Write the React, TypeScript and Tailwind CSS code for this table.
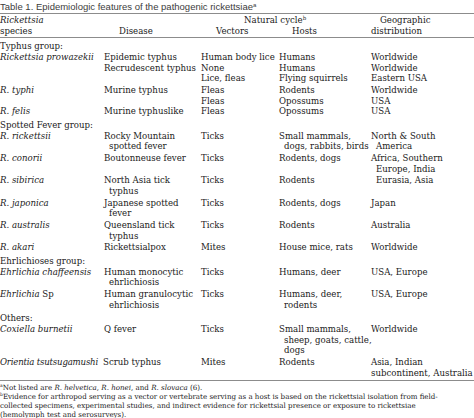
import type { ReactNode } from "react";

type Entry = {
  species?: ReactNode;
  disease?: string[];
  vectors?: string[];
  hosts?: string[];
  geo?: string[];
  gap?: boolean;
  tight?: boolean;
};

type Row = { heading: string } | Entry;

const rows: Row[] = [
  { heading: "Typhus group:" },
  {
    species: <i>Rickettsia prowazekii</i>,
    disease: ["Epidemic typhus"],
    vectors: ["Human body lice"],
    hosts: ["Humans"],
    geo: ["Worldwide"],
  },
  {
    disease: ["Recrudescent typhus"],
    vectors: ["None"],
    hosts: ["Humans"],
    geo: ["Worldwide"],
  },
  {
    vectors: ["Lice, fleas"],
    hosts: ["Flying squirrels"],
    geo: ["Eastern USA"],
  },
  {
    species: <i>R. typhi</i>,
    disease: ["Murine typhus"],
    vectors: ["Fleas", "Fleas"],
    hosts: ["Rodents", "Opossums"],
    geo: ["Worldwide", "USA"],
    gap: true,
  },
  {
    species: <i>R. felis</i>,
    disease: ["Murine typhuslike"],
    vectors: ["Fleas"],
    hosts: ["Opossums"],
    geo: ["USA"],
  },
  { heading: "Spotted Fever group:" },
  {
    species: <i>R. rickettsii</i>,
    disease: ["Rocky Mountain", " spotted fever"],
    vectors: ["Ticks"],
    hosts: ["Small mammals,", " dogs, rabbits, birds"],
    geo: ["North & South", " America"],
  },
  {
    species: <i>R. conorii</i>,
    disease: ["Boutonneuse fever"],
    vectors: ["Ticks"],
    hosts: ["Rodents, dogs"],
    geo: ["Africa, Southern", " Europe, India"],
    gap: true,
  },
  {
    species: <i>R. sibirica</i>,
    disease: ["North Asia tick", " typhus"],
    vectors: ["Ticks"],
    hosts: ["Rodents"],
    geo: [" Eurasia, Asia"],
    gap: true,
  },
  {
    species: <i>R. japonica</i>,
    disease: ["Japanese spotted", " fever"],
    vectors: ["Ticks"],
    hosts: ["Rodents, dogs"],
    geo: ["Japan"],
    gap: true,
  },
  {
    species: <i>R. australis</i>,
    disease: ["Queensland tick", " typhus"],
    vectors: ["Ticks"],
    hosts: ["Rodents"],
    geo: ["Australia"],
    gap: true,
  },
  {
    species: <i>R. akari</i>,
    disease: ["Rickettsialpox"],
    vectors: ["Mites"],
    hosts: ["House mice, rats"],
    geo: ["Worldwide"],
    gap: true,
  },
  { heading: "Ehrlichioses group:" },
  {
    species: <i>Ehrlichia chaffeensis</i>,
    disease: ["Human monocytic", " ehrlichiosis"],
    vectors: ["Ticks"],
    hosts: ["Humans, deer"],
    geo: ["USA, Europe"],
  },
  {
    species: (
      <>
        <i>Ehrlichia</i> Sp
      </>
    ),
    disease: ["Human granulocytic", " ehrlichiosis"],
    vectors: ["Ticks"],
    hosts: ["Humans, deer,", " rodents"],
    geo: ["USA, Europe"],
    gap: true,
  },
  { heading: "Others:" },
  {
    species: <i>Coxiella burnetii</i>,
    disease: ["Q fever"],
    vectors: ["Ticks"],
    hosts: ["Small mammals,", " sheep, goats, cattle,", " dogs"],
    geo: ["Worldwide"],
  },
  {
    species: <i>Orientia tsutsugamushi</i>,
    disease: ["Scrub typhus"],
    vectors: ["Mites"],
    hosts: ["Rodents"],
    geo: ["Asia, Indian", "subcontinent, Australia"],
    gap: true,
    tight: true,
  },
];

const grid = "grid grid-cols-[104px_97px_78px_92px_1fr]";

function Lines({ lines }: { lines?: string[] }) {
  return (
    <div>
      {(lines ?? []).map((l, i) => (
        <div
          key={i}
          className={`whitespace-nowrap ${l.startsWith(" ") ? "pl-[5px]" : ""}`}
        >
          {l.trim()}
        </div>
      ))}
    </div>
  );
}

function EntryRow({ e }: { e: Entry }) {
  return (
    <div className={`${grid} ${e.gap ? "mt-[1px]" : ""}`}>
      <div
        className={`whitespace-nowrap ${e.tight ? "tracking-[-0.2px]" : ""}`}
      >
        {e.species}
      </div>
      <div className={e.tight ? "-ml-[1px]" : ""}>
        <Lines lines={e.disease} />
      </div>
      <Lines lines={e.vectors} />
      <Lines lines={e.hosts} />
      <Lines lines={e.geo} />
    </div>
  );
}

export default function App() {
  return (
    <div className="w-[474px] h-[418px] overflow-hidden bg-white text-[#1a1a1a] font-['DejaVu_Serif',serif]">
      <div className="font-['Liberation_Sans',sans-serif] text-[9.5px] leading-[12px] text-[#3c3c3c] whitespace-nowrap pt-px">
        Table 1. Epidemiologic features of the pathogenic rickettsiae
        <span className="text-[6px] align-[3px] leading-none">a</span>
      </div>
      <div className="h-px bg-[#8c8c8c]" />

      <div className="text-[8.6px] leading-[10.67px] pt-px">
        <div className={grid}>
          <div className="italic">Rickettsia</div>
          <div />
          <div className="col-span-2 pl-[43px] whitespace-nowrap">
            Natural cycle
            <span className="text-[5.5px] align-[3px] leading-none">b</span>
          </div>
          <div className="pl-[9px]">Geographic</div>
        </div>
        <div className={grid}>
          <div>species</div>
          <div className="pl-[15px]">Disease</div>
          <div className="pl-[15px]">Vectors</div>
          <div className="pl-[13px]">Hosts</div>
          <div>distribution</div>
        </div>
      </div>
      <div className="h-px bg-[#8c8c8c] mt-px" />

      <div className="text-[8.6px] leading-[10.67px] pt-[3px]">
        {rows.map((r, i) =>
          "heading" in r ? (
            <div key={i} className={i === 0 ? "" : "mt-[3px]"}>
              {r.heading}
            </div>
          ) : (
            <EntryRow key={i} e={r} />
          ),
        )}
      </div>
      <div className="h-px bg-[#8c8c8c] mt-px" />

      <div className="text-[7.1px] leading-[9.2px] pt-[2px] whitespace-nowrap">
        <div>
          <span className="text-[4.5px] align-[3px] leading-none">a</span>Not
          listed are <i>R. helvetica</i>, <i>R. honei</i>, and{" "}
          <i>R. slovaca</i> (6).
        </div>
        <div>
          <span className="text-[4.5px] align-[3px] leading-none">b</span>
          Evidence for arthropod serving as a vector or vertebrate serving as a
          host is based on the rickettsial isolation from field-
        </div>
        <div>
          collected specimens, experimental studies, and indirect evidence for
          rickettsial presence or exposure to rickettsiae
        </div>
        <div>(hemolymph test and serosurveys).</div>
      </div>
    </div>
  );
}
